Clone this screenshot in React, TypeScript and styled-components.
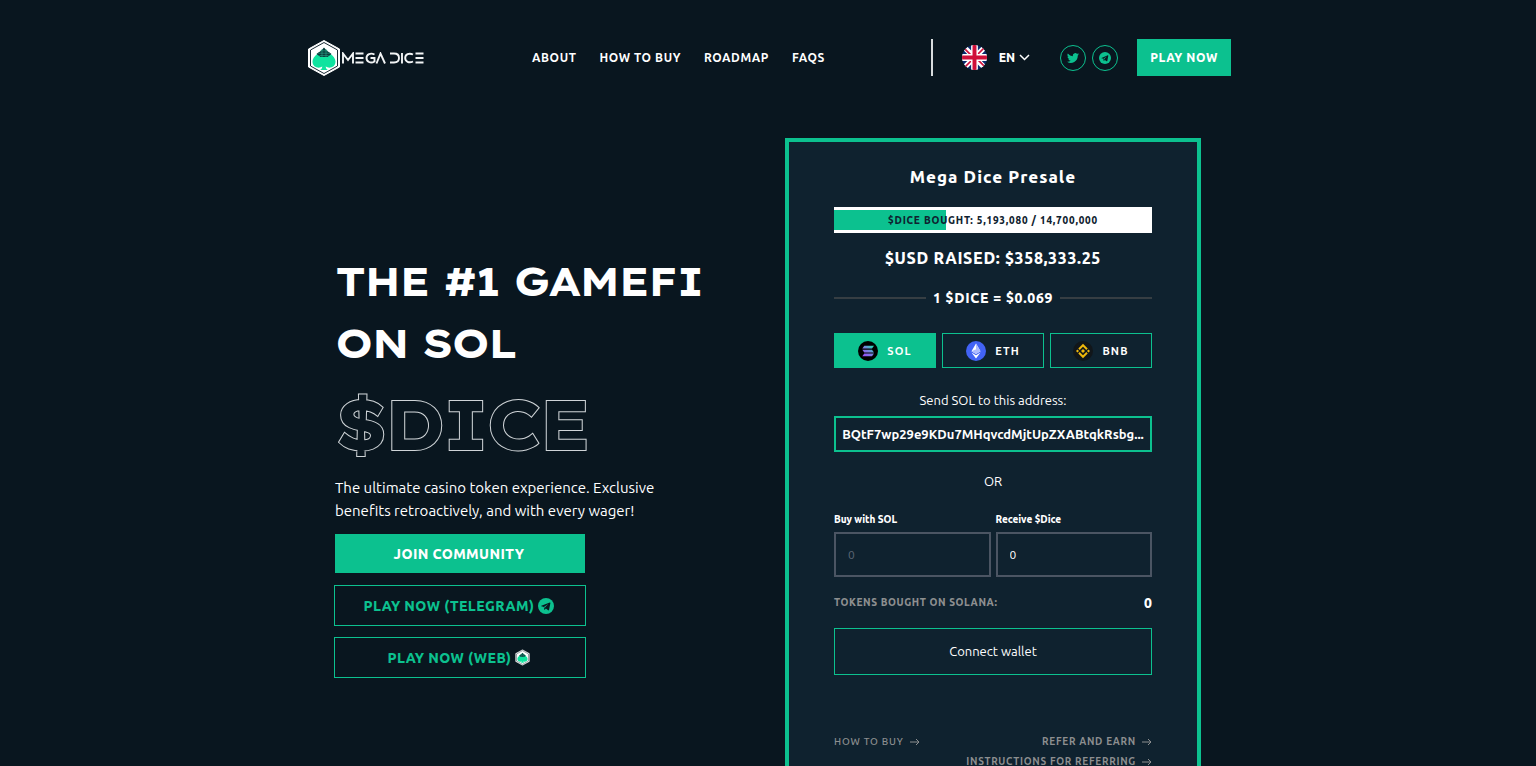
import React, { useState } from "react";
import styled, { createGlobalStyle, css } from "styled-components";

const green = "#0cc18f";
const night = "#09161f";
const font = `Ubuntu, "Noto Sans", "Open Sans", sans-serif`;
const display = `"Lexend Exa", "Lexend Deca", Lexend, Inter, sans-serif`;

const Global = createGlobalStyle`
  * { box-sizing: border-box; }
  body { margin: 0; background: ${night}; color: #fff; font-family: ${font}; }
  button, input { font-family: inherit; border-radius: 0; }
  h1, h2, p { margin: 0; }
  a { color: inherit; text-decoration: none; }
`;

const Page = styled.div`
  height: 100vh;
  overflow: hidden;
`;
const Header = styled.header`
  display: flex;
  align-items: center;
  max-width: 926px;
  height: 37px;
  margin: 39px auto 0;
  padding-left: 2px;
`;
const Logo = styled.a`
  display: flex;
  align-items: center;
  gap: 1px;
  width: 118px;
  margin-right: 107px;
`;
const Nav = styled.nav`
  display: flex;
  flex: 1;
  gap: 23px;
  font-size: 12px;
  font-weight: 600;
  letter-spacing: 0.05em;
  white-space: nowrap;
`;
const Tools = styled.div`
  display: flex;
  align-items: center;
  height: 37px;
  padding-left: 29px;
  border-left: 2px solid #d8dcde;
`;
const Language = styled.button`
  display: flex;
  align-items: center;
  gap: 4px;
  padding: 0;
  margin-right: 30px;
  border: 0;
  background: none;
  color: #fff;
  font-size: 12px;
  font-weight: 800;
`;
const Flag = styled.svg`
  margin-right: 8px;
`;
const Social = styled.a`
  display: grid;
  place-items: center;
  width: 26px;
  height: 26px;
  margin-right: 6px;
  border: 1px solid ${green};
  border-radius: 50%;
  color: ${green};
`;
const PlayButton = styled.button`
  width: 94px;
  height: 37px;
  margin-left: 13px;
  padding: 0;
  border: 0;
  background: ${green};
  color: #fff;
  font-size: 12px;
  font-weight: 800;
  letter-spacing: 0.05em;
`;
const Main = styled.main`
  display: flex;
  justify-content: space-between;
  align-items: flex-start;
  max-width: 868px;
  margin: 62px auto 0;
  padding-right: 1px;
`;
const Hero = styled.section`
  padding-top: 112px;
`;
const Title = styled.h1`
  padding-left: 1px;
  font-family: ${display};
  font-size: 41px;
  font-weight: 700;
  line-height: 62px;
  letter-spacing: -0.05em;
  white-space: nowrap;
`;
const Outline = styled.svg`
  display: block;
  margin-top: 10px;
  overflow: visible;
`;
const Lead = styled.p`
  max-width: 340px;
  margin-top: 4px;
  padding-left: 1px;
  font-size: 15px;
  line-height: 23px;
`;
const Actions = styled.div`
  display: flex;
  flex-direction: column;
  gap: 11px;
  width: 252px;
  margin-top: 11px;
`;
const Action = styled.button<{ $solid?: boolean }>`
  display: flex;
  align-items: center;
  justify-content: center;
  gap: 4px;
  height: 41px;
  padding: 0 2px 0 0;
  border: 1px solid ${(p) => (p.$solid ? "transparent" : green)};
  background: ${(p) => (p.$solid ? green : "transparent")};
  background-clip: padding-box;
  color: ${(p) => (p.$solid ? "#fff" : green)};
  font-size: 14px;
  font-weight: 800;
  letter-spacing: 0.03em;
`;
const Card = styled.section`
  width: 416px;
  padding: 22px 45px 40px;
  border: 4px solid ${green};
  background: #0f222f;
`;
const CardTitle = styled.h2`
  font-size: 17px;
  font-weight: 800;
  line-height: 25px;
  letter-spacing: 0.06em;
  text-align: center;
`;
const Progress = styled.div`
  display: grid;
  align-items: center;
  height: 26px;
  margin-top: 18px;
  background: #fff;
`;
const Fill = styled.div`
  grid-area: 1 / 1;
  height: 20px;
  background: ${green};
`;
const ProgressText = styled.div`
  grid-area: 1 / 1;
  color: #0f222f;
  font-size: 10px;
  font-weight: 800;
  letter-spacing: 0.08em;
  text-align: center;
`;
const Raised = styled.p`
  margin-top: 13px;
  font-size: 16px;
  font-weight: 800;
  line-height: 24px;
  letter-spacing: 0.04em;
  text-align: center;
`;
const Rate = styled.p`
  display: flex;
  align-items: center;
  gap: 7px;
  margin-top: 18px;
  font-size: 14px;
  font-weight: 800;
  line-height: 20px;
  letter-spacing: 0.05em;
  white-space: nowrap;
  &::before, &::after {
    content: "";
    flex: 1;
    height: 2px;
    background: #363e43;
  }
`;
const Coins = styled.div`
  display: grid;
  grid-template-columns: repeat(3, 1fr);
  gap: 6px;
  margin-top: 25px;
`;
const Coin = styled.button<{ $active: boolean }>`
  display: flex;
  align-items: center;
  justify-content: center;
  gap: 9px;
  height: 35px;
  padding: 0;
  border: 1px solid ${green};
  background: ${(p) => (p.$active ? green : "transparent")};
  color: #fff;
  font-size: 11px;
  font-weight: 700;
  letter-spacing: 0.1em;
`;
const Note = styled.p`
  font-size: 13px;
  line-height: 20px;
  text-align: center;
`;
const SendNote = styled(Note)`
  margin-top: 22px;
`;
const OrNote = styled(Note)`
  margin: 19px 0 20px;
`;
const Address = styled.button`
  display: block;
  width: 100%;
  height: 36px;
  margin-top: 6px;
  padding: 0 5px;
  border: 2px solid ${green};
  background: none;
  color: #fff;
  font-size: 13px;
  font-weight: 700;
  white-space: nowrap;
`;
const Fields = styled.div`
  display: grid;
  grid-template-columns: 1fr 1fr;
  gap: 5px;
`;
const Field = styled.label`
  font-size: 10px;
  font-weight: 800;
  line-height: 18px;
`;
const Input = styled.input`
  display: block;
  width: 100%;
  height: 45px;
  margin-top: 3px;
  padding: 0 12px;
  border: 2px solid #4b5563;
  outline: 0;
  background: transparent;
  color: #fff;
  font-size: 12px;
  &::placeholder { color: #5b6573; }
`;
const Bought = styled.p`
  display: flex;
  align-items: center;
  justify-content: space-between;
  margin-top: 16px;
  color: #8d8f90;
  font-size: 10px;
  font-weight: 800;
  line-height: 20px;
  letter-spacing: 0.06em;
`;
const Count = styled.span`
  color: #fff;
  font-size: 14px;
  letter-spacing: 0;
`;
const Connect = styled.button`
  width: 100%;
  height: 47px;
  margin-top: 15px;
  padding-bottom: 3px;
  border: 1px solid ${green};
  background: none;
  color: #fff;
  font-size: 13px;
`;
const CardLinks = styled.div`
  display: flex;
  justify-content: space-between;
  margin-top: 57px;
`;
const LinkColumn = styled.div`
  display: flex;
  flex-direction: column;
  align-items: flex-end;
`;
const CardLink = styled.a<{ $strong?: boolean }>`
  display: flex;
  align-items: center;
  gap: 6px;
  color: #8d8f90;
  font-size: 10px;
  font-weight: 500;
  line-height: 20px;
  letter-spacing: 0.08em;
  ${(p) => p.$strong && css`font-weight: 700; letter-spacing: 0.07em;`}
`;

const Badge = ({ width, height }: { width: number; height: number }) => (
  <svg width={width} height={height} viewBox="0 0 34 38" aria-hidden="true">
    <path d="M17 1.500 32.500 10V28L17 36.500 1.500 28V10Z" fill="#fff" stroke="#fff" strokeWidth="1" strokeLinejoin="round" />
    <path d="M17 3.500 30.500 11V27L17 34.500 3.500 27V11Z" fill="none" stroke="#1b2b35" strokeWidth="1" />
    <path d="M17 9c3 4.500 11.500 7.500 11.500 13.500 0 6-6.500 7.500-9.800 5 .2 1.800 1 2.800 2.300 3.500h-8c1.300-.7 2.100-1.700 2.300-3.500-3.300 2.500-9.800 1-9.800-5C5.500 16.500 14 13.500 17 9Z" fill="#0fe39f" />
    <path d="M17 8.500c2 3 5 4.500 7.500 6.500L20.500 18h-7l-4-3C12 13 15 11.500 17 8.500Z" fill="#0a3a3b" />
    <path d="M11 14.200h12M13.500 11.800h7M12.500 16.600h9M15 10v8M19 10v8" stroke="#2aa889" strokeWidth=".6" />
  </svg>
);

const Wordmark = () => (
  <svg width="83" height="12" viewBox="0 0 83 12" fill="none" stroke="#f2f4f5" strokeWidth="1.900" role="img" aria-label="Mega Dice">
    <path d="M1 11.500V1.500l5 6.500 5-6.500v10M13.500 1.500h8M13.500 6h8M13.500 10.500h8M32.500 2.500C28.500.3 24.500 2.500 24.500 6s4 6 8 3.500V6h-4M34.500 11.500l4-10 4.500 10M48 1.500h4c3 0 5 1.500 5 4.500s-2 4.500-5 4.500h-4M60 1v10.500M71 2.500c-4-2-7.800 0-7.800 3.500s3.800 5.500 7.800 3.500M73.500 1.500h8M73.500 6h8M73.500 10.500h8" />
  </svg>
);

const UkFlag = () => (
  <Flag width="25" height="25" viewBox="0 0 24 24" aria-hidden="true">
    <clipPath id="round-flag"><circle cx="12" cy="12" r="12" /></clipPath>
    <g clipPath="url(#round-flag)">
      <path fill="#0a2a6e" d="M0 0h24v24H0z" />
      <path stroke="#fff" strokeWidth="5" d="m0 0 24 24M24 0 0 24" />
      <path stroke="#d0103a" strokeWidth="1.600" d="m0 1 12 12M24 0 12 12M0 24l12-12M24 23 12 11" />
      <path stroke="#fff" strokeWidth="6.500" d="M12 0v24M0 12h24" />
      <path stroke="#d0103a" strokeWidth="3.800" d="M12 0v24M0 12h24" />
    </g>
  </Flag>
);

const Telegram = ({ size }: { size: number }) => (
  <svg width={size} height={size} viewBox="0 0 24 24" aria-hidden="true">
    <circle cx="12" cy="12" r="12" fill={green} />
    <path d="m5 11.800 12.600-5.100c.8-.2 1.100.2 1 .9l-2 10.200c-.2.800-.8 1-1.400.600l-3.400-2.500-1.700 1.700c-.4.300-.7.200-.8-.3L8.800 13.500 5 12.400c-.5-.2-.5-.4 0-.6Z" fill={night} />
    <path d="m9.300 13.200 6.200-4.200-4.800 4.800-.5 2.300Z" fill={green} />
  </svg>
);

const Twitter = () => (
  <svg width="12" height="12" viewBox="0 0 24 24" fill="currentColor" aria-hidden="true">
    <path d="M24 4.600a10 10 0 0 1-2.800.8 5 5 0 0 0 2.100-2.700 10 10 0 0 1-3.100 1.200 4.900 4.900 0 0 0-8.400 4.500A14 14 0 0 1 1.700 3.100a4.900 4.900 0 0 0 1.500 6.600 5 5 0 0 1-2.200-.6 4.900 4.900 0 0 0 3.900 4.900 5 5 0 0 1-2.200.1 4.900 4.900 0 0 0 4.600 3.400A9.900 9.900 0 0 1 0 19.500a14 14 0 0 0 21.500-12.400A10 10 0 0 0 24 4.600Z" />
  </svg>
);

const Arrow = () => (
  <svg width="10" height="8" viewBox="0 0 10 8" fill="none" stroke="currentColor" aria-hidden="true">
    <path d="M0 4h9M6 1l3 3-3 3" />
  </svg>
);

const SolIcon = () => (
  <svg width="20" height="20" viewBox="0 0 20 20" aria-hidden="true">
    <defs>
      <linearGradient id="sol" x1="0" y1="1" x2="1" y2="0">
        <stop stopColor="#9945ff" /><stop offset=".5" stopColor="#7a7fe0" /><stop offset="1" stopColor="#19e6ad" />
      </linearGradient>
    </defs>
    <circle cx="10" cy="10" r="10" fill="#000" />
    <path fill="url(#sol)" d="M6.300 4.800H16l-2 2.700H4.300ZM4.300 8.700H14l2 2.700H6.300ZM6.300 12.600H16L14 15.300H4.300Z" />
  </svg>
);
const EthIcon = () => (
  <svg width="20" height="20" viewBox="0 0 20 20" aria-hidden="true">
    <circle cx="10" cy="10" r="10" fill="#4263f5" />
    <path fill="#fff" d="m10 2.500-4.500 7.800L10 13l4.500-2.700ZM5.500 11.500 10 17.500l4.500-6L10 14.200Z" />
    <path fill="#aebcff" d="m10 2.500 4.500 7.800L10 13ZM10 8.300l4.500 2L10 13l-4.500-2.700Z" />
  </svg>
);
const BnbIcon = () => (
  <svg width="20" height="20" viewBox="0 0 20 20" aria-hidden="true">
    <circle cx="10" cy="10" r="10" fill="#11161a" />
    <path fill="none" stroke="#f0b90b" strokeWidth="2" d="M6 8.200 10 4.200l4 4M6 11.800l4 4 4-4" />
    <path fill="#f0b90b" d="m10 8 2 2-2 2-2-2ZM4.500 8.500 6 10l-1.500 1.500L3 10ZM15.500 8.500 17 10l-1.500 1.500L14 10Z" />
  </svg>
);

const coins = [
  { name: "SOL", Icon: SolIcon },
  { name: "ETH", Icon: EthIcon },
  { name: "BNB", Icon: BnbIcon },
];

export default function App() {
  const [coin, setCoin] = useState("SOL");
  const [amount, setAmount] = useState("");
  const progress = (5193080 / 14700000) * 100;
  return (
    <Page>
      <Global />
      <Header>
        <Logo href="#"><Badge width={34} height={38} /><Wordmark /></Logo>
        <Nav>
          <a href="#about">ABOUT</a>
          <a href="#how">HOW TO BUY</a>
          <a href="#roadmap">ROADMAP</a>
          <a href="#faqs">FAQS</a>
        </Nav>
        <Tools>
          <Language>
            <UkFlag />EN
            <svg width="11" height="7" viewBox="0 0 11 7" fill="none" stroke="#fff" strokeWidth="1.500" aria-hidden="true"><path d="m1 1 4.500 4.500L10 1" /></svg>
          </Language>
          <Social href="#twitter" aria-label="Twitter"><Twitter /></Social>
          <Social href="#telegram" aria-label="Telegram"><Telegram size={12} /></Social>
          <PlayButton>PLAY NOW</PlayButton>
        </Tools>
      </Header>
      <Main>
        <Hero>
          <Title>THE #1 GAMEFI<br />ON SOL</Title>
          <Outline width="256" height="88" role="img" aria-label="$DICE">
            <text x="1" y="66" fill={night} stroke="#cfd4d7" strokeWidth="2" paintOrder="stroke" fontFamily={display} fontWeight="700" fontSize="70" letterSpacing="-0.06em">$DICE</text>
          </Outline>
          <Lead>The ultimate casino token experience. Exclusive benefits retroactively, and with every wager!</Lead>
          <Actions>
            <Action $solid>JOIN COMMUNITY</Action>
            <Action>PLAY NOW (TELEGRAM)<Telegram size={16} /></Action>
            <Action>PLAY NOW (WEB)<Badge width={15} height={17} /></Action>
          </Actions>
        </Hero>
        <Card>
          <CardTitle>Mega Dice Presale</CardTitle>
          <Progress>
            <Fill style={{ width: `${progress}%` }} />
            <ProgressText>$DICE BOUGHT: 5,193,080 / 14,700,000</ProgressText>
          </Progress>
          <Raised>$USD RAISED: $358,333.25</Raised>
          <Rate>1 $DICE = $0.069</Rate>
          <Coins>
            {coins.map(({ name, Icon }) => (
              <Coin key={name} $active={coin === name} onClick={() => setCoin(name)}><Icon />{name}</Coin>
            ))}
          </Coins>
          <SendNote>Send {coin} to this address:</SendNote>
          <Address>BQtF7wp29e9KDu7MHqvcdMjtUpZXABtqkRsbg...</Address>
          <OrNote>OR</OrNote>
          <Fields>
            <Field>Buy with {coin}<Input placeholder="0" value={amount} onChange={(e) => setAmount(e.target.value)} /></Field>
            <Field>Receive $Dice<Input value="0" readOnly /></Field>
          </Fields>
          <Bought>TOKENS BOUGHT ON SOLANA: <Count>0</Count></Bought>
          <Connect>Connect wallet</Connect>
          <CardLinks>
            <LinkColumn><CardLink href="#how">HOW TO BUY <Arrow /></CardLink></LinkColumn>
            <LinkColumn>
              <CardLink $strong href="#refer">REFER AND EARN <Arrow /></CardLink>
              <CardLink $strong href="#instructions">INSTRUCTIONS FOR REFERRING <Arrow /></CardLink>
            </LinkColumn>
          </CardLinks>
        </Card>
      </Main>
    </Page>
  );
}
